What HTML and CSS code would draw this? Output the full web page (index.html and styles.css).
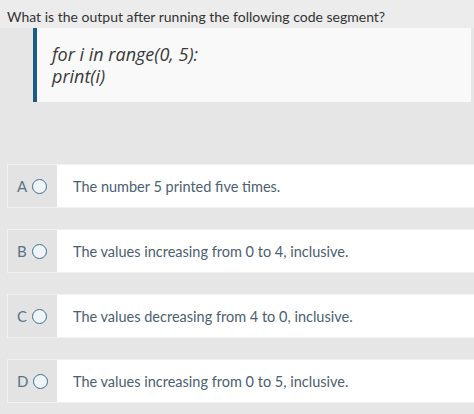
FILE: index.html
```html
<!DOCTYPE html>
<html>
<head>
<meta charset="utf-8">
<link rel="stylesheet" href="styles.css">
</head>
<body>
<div class="question">What is the output after running the following code segment?</div>
<div class="code">
  <div class="line">for i in range(0, 5):</div>
  <div class="line">print(i)</div>
</div>
<div class="options">
  <div class="option">
    <div class="key"><span class="letter">A</span><span class="radio"></span></div>
    <div class="text">The number 5 printed five times.</div>
  </div>
  <div class="option">
    <div class="key"><span class="letter">B</span><span class="radio"></span></div>
    <div class="text">The values increasing from 0 to 4, inclusive.</div>
  </div>
  <div class="option">
    <div class="key"><span class="letter">C</span><span class="radio"></span></div>
    <div class="text">The values decreasing from 4 to 0, inclusive.</div>
  </div>
  <div class="option">
    <div class="key"><span class="letter">D</span><span class="radio"></span></div>
    <div class="text">The values increasing from 0 to 5, inclusive.</div>
  </div>
</div>
</body>
</html>
```
FILE: styles.css
```css
html, body {
  margin: 0;
  padding: 0;
}
body {
  width: 474px;
  height: 414px;
  overflow: hidden;
  background: #e6e6e6;
  font-family: Lato, "Noto Sans", sans-serif;
}
.question {
  height: 28px;
  box-sizing: border-box;
  padding: 8px 0 0 7px;
  background: #ececec;
  color: #333;
  font-size: 14px;
  line-height: 18px;
}
.code {
  margin: 0 3px 0 33px;
  height: 74px;
  box-sizing: border-box;
  border-left: 4px solid #1b5c84;
  background: #f9f9f9;
  padding: 15px 0 0 15px;
  color: #3a3a3a;
  font-family: "Open Sans", "Noto Sans", sans-serif;
  font-style: italic;
  font-size: 18px;
  line-height: 22px;
}
.options {
  display: flex;
  flex-direction: column;
  gap: 21px;
  margin: 62px 0 0 7px;
}
.option {
  display: flex;
  height: 44px;
  box-sizing: border-box;
  border: 1px solid #f1f1f1;
  border-right: none;
}
.key {
  width: 49px;
  background: #e3e3e3;
  display: flex;
  align-items: center;
  padding-left: 9px;
  box-sizing: border-box;
  gap: 5px;
}
.letter {
  color: #5a7384;
  font-size: 15px;
}
.radio {
  width: 13px;
  height: 13px;
  border: 1.6px solid #3f6f8e;
  border-radius: 50%;
  background: #eef4f8;
}
.text {
  flex: 1;
  background: #fff;
  display: flex;
  align-items: center;
  padding-left: 16px;
  color: #4b6070;
  font-size: 14.5px;
}
```
